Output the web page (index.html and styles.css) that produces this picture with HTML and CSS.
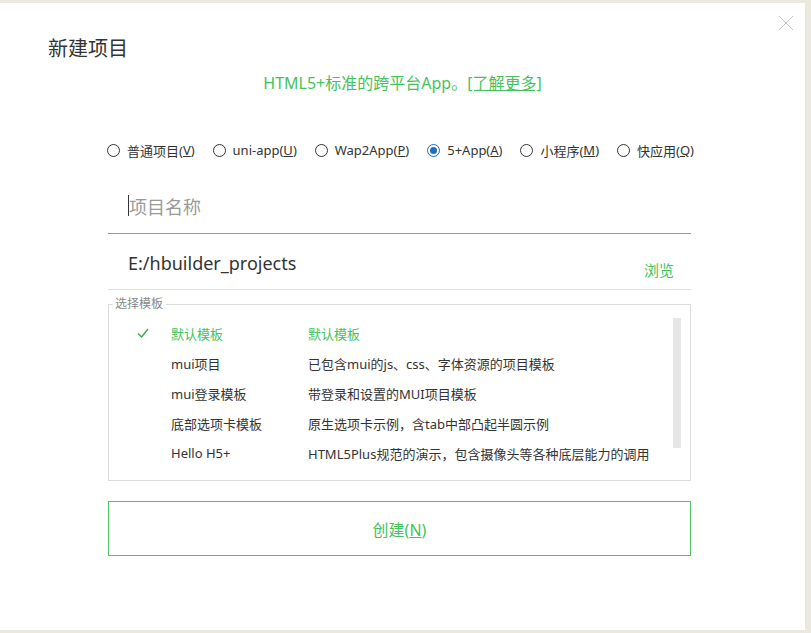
FILE: index.html
```html
<!DOCTYPE html>
<html lang="zh-CN">
<head>
  <meta charset="UTF-8" />
  <title>新建项目</title>
  <link rel="stylesheet" href="styles.css">
</head>
<body>
  <div class="dialog">
    <span class="close">
      <svg width="16" height="16" viewBox="0 0 16 16"><path d="M1 1L15 15M15 1L1 15" stroke="#c4c4c4" stroke-width="1" fill="none"/></svg>
    </span>
    <h1 class="title">新建项目</h1>
    <p class="intro">HTML5+标准的跨平台App。<a href="#">[了解更多]</a></p>

    <div class="form">
      <div class="types">
        <label class="type"><span class="radio"></span>普通项目(<u>V</u>)</label>
        <label class="type"><span class="radio"></span>uni-app(<u>U</u>)</label>
        <label class="type"><span class="radio"></span>Wap2App(<u>P</u>)</label>
        <label class="type"><span class="radio on"></span>5+App(<u>A</u>)</label>
        <label class="type"><span class="radio"></span>小程序(<u>M</u>)</label>
        <label class="type"><span class="radio"></span>快应用(<u>Q</u>)</label>
      </div>

      <div class="name-field">
        <span class="caret"></span><span class="placeholder">项目名称</span>
      </div>

      <div class="path-field">
        <span class="path">E:/hbuilder_projects</span>
        <a class="browse" href="#">浏览</a>
      </div>

      <fieldset class="templates">
        <legend>选择模板</legend>
        <div class="list">
          <div class="row active"><span class="check"><svg width="12" height="10" viewBox="0 0 12 10"><path d="M1 5.5L4.5 9L11 1" stroke="#3aa85a" stroke-width="1.4" fill="none"/></svg></span><span class="name">默认模板</span><span class="desc">默认模板</span></div>
          <div class="row"><span class="check"></span><span class="name">mui项目</span><span class="desc">已包含mui的js、css、字体资源的项目模板</span></div>
          <div class="row"><span class="check"></span><span class="name">mui登录模板</span><span class="desc">带登录和设置的MUI项目模板</span></div>
          <div class="row"><span class="check"></span><span class="name">底部选项卡模板</span><span class="desc">原生选项卡示例，含tab中部凸起半圆示例</span></div>
          <div class="row"><span class="check"></span><span class="name">Hello H5+</span><span class="desc">HTML5Plus规范的演示，包含摄像头等各种底层能力的调用</span></div>
        </div>
        <div class="scrollbar"></div>
      </fieldset>

      <button class="create">创建(<u>N</u>)</button>
    </div>
  </div>
</body>
</html>
```

FILE: styles.css
```css
body {
  margin: 0;
  background: #ebe8de;
  font-family: "Noto Sans", "Noto Sans CJK SC", sans-serif;
  color: #333;
  height: 633px;
  overflow: hidden;
}
.dialog {
  position: relative;
  width: 805px;
  height: 627px;
  margin-top: 3px;
  background: #fff;
  padding-top: 32px;
  box-sizing: border-box;
}
.close {
  position: absolute;
  top: 11px;
  right: 11px;
  width: 16px;
  height: 16px;
}
.title {
  margin: 0 0 0 48px;
  font-size: 20px;
  font-weight: normal;
  line-height: 28px;
  color: #333;
}
.intro {
  margin: 8px 0 0;
  text-align: center;
  font-size: 16px;
  line-height: 24px;
  color: #44c35c;
}
.intro a {
  color: #44c35c;
}
.form {
  width: 583px;
  margin: 45px 0 0 108px;
}
.types {
  display: flex;
  justify-content: space-between;
  margin-left: -1px;
  margin-right: -3px;
  height: 20px;
  align-items: center;
  font-size: 13px;
}
.type {
  display: flex;
  align-items: center;
  white-space: nowrap;
}
.radio {
  width: 11px;
  height: 11px;
  border: 1px solid #333;
  border-radius: 50%;
  margin-right: 7px;
  position: relative;
}
.radio.on {
  border-color: #1a6fc9;
}
.radio.on::after {
  content: "";
  position: absolute;
  left: 2px;
  top: 2px;
  width: 7px;
  height: 7px;
  border-radius: 50%;
  background: #1a6fc9;
}
.name-field {
  display: flex;
  align-items: center;
  height: 48px;
  margin-top: 26px;
  padding: 0 0 8px 20px;
  box-sizing: border-box;
  border-bottom: 1px solid #4cc764;
}
.caret {
  width: 1px;
  height: 21px;
  background: #333;
}
.placeholder {
  font-size: 18px;
  color: #999;
}
.path-field {
  display: flex;
  justify-content: space-between;
  height: 55px;
  padding: 0 17px 0 20px;
  border-bottom: 1px solid #e0e0e0;
}
.path {
  font-size: 18px;
  line-height: 24px;
  margin-top: 17px;
}
.browse {
  font-size: 15px;
  line-height: 20px;
  margin-top: 26px;
  color: #44c35c;
  text-decoration: none;
}
.templates {
  position: relative;
  margin: 6px 0 0;
  padding: 6px 0 11px;
  border: 1px solid #dcdcdc;
  height: 185px;
  box-sizing: border-box;
}
.templates legend {
  margin-left: 4px;
  padding: 0 3px 0 2px;
  font-size: 12px;
  line-height: 16px;
  color: #888;
}
.row {
  display: flex;
  align-items: center;
  height: 30px;
  font-size: 13px;
}
.row.active {
  color: #44c35c;
}
.check {
  display: flex;
  align-items: center;
  width: 62px;
  padding-left: 28px;
  box-sizing: border-box;
}
.name {
  width: 137px;
}
.scrollbar {
  position: absolute;
  right: 9px;
  top: 6px;
  width: 8px;
  height: 130px;
  background: #e6e6e6;
}
.create {
  display: block;
  width: 100%;
  height: 55px;
  margin-top: 20px;
  background: #fff;
  border: 1px solid #55c066;
  color: #44c35c;
  font-family: inherit;
  font-size: 16px;
  cursor: pointer;
}
```
